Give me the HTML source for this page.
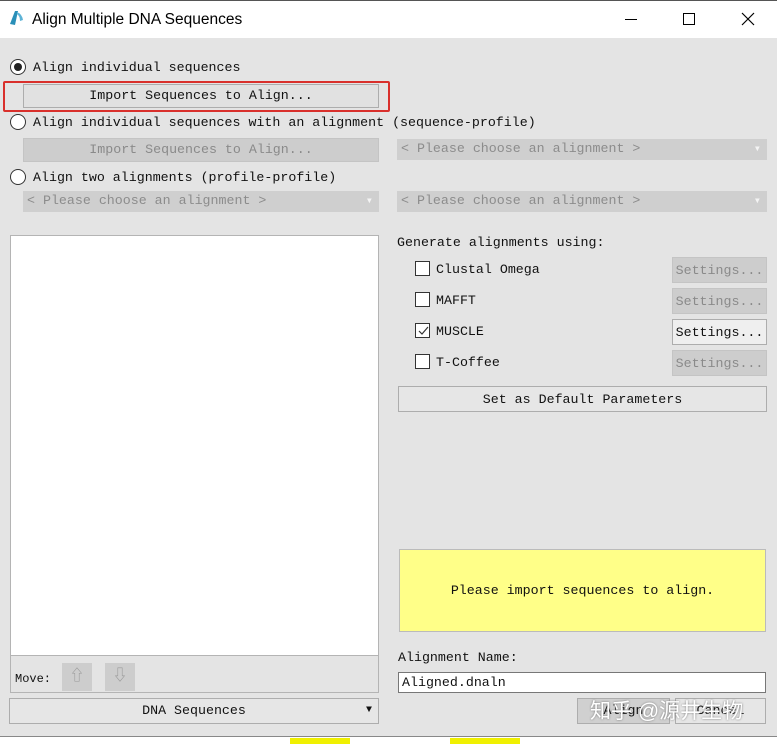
<!DOCTYPE html>
<html><head><meta charset="utf-8"><style>
*{box-sizing:border-box;margin:0;padding:0}
body{width:777px;height:744px;overflow:hidden;background:#e4e4e4;font-family:"Liberation Mono","Noto Sans CJK SC",monospace;font-size:13.3px;color:#111;position:relative}
.a{position:absolute}
.t{position:absolute;white-space:nowrap;line-height:16px}
.btn{position:absolute;border:1px solid #adadad;background:#e6e6e6;text-align:center;line-height:22px;white-space:nowrap}
.dis{background:#cdcdcd;border-color:#c4c4c4;color:#8a8a8a}
.combo{position:absolute;background:#cfcfcf;color:#8c8c8c;line-height:20px;padding-left:4px;white-space:nowrap}
.combo:after{content:"▾";position:absolute;right:6px;top:0;color:#f4f4f4;font-size:12px}
.radio{position:absolute;width:16px;height:16px;border:1px solid #333;border-radius:50%;background:#fff}
.cb{position:absolute;width:15px;height:15px;border:1px solid #333;background:#fff}
</style></head><body>
<div class="a" style="left:0;top:0;width:777px;height:38px;background:#fff;border-top:1px solid #555"></div>
<svg class="a" style="left:7px;top:8px" width="20" height="20" viewBox="0 0 20 20"><path d="M3 16 L8 3 L11 3 L8 17 Z" fill="#2a8fb8"/><path d="M10 4 Q15 6 16 12 L13 13 Q13 8 10 6Z" fill="#5db3d6"/></svg>
<div class="t" style="left:32px;top:10px;font-family:'Liberation Sans','Noto Sans CJK SC',sans-serif;font-size:15.5px;line-height:20px;color:#000">Align Multiple DNA Sequences</div>
<div class="a" style="left:625px;top:19px;width:12px;height:1px;background:#000"></div>
<div class="a" style="left:683px;top:13px;width:12px;height:12px;border:1px solid #000"></div>
<svg class="a" style="left:741px;top:12px" width="14" height="14"><path d="M1 1L13 13M13 1L1 13" stroke="#000" stroke-width="1.2"/></svg>

<div class="radio" style="left:10px;top:59px"><div class="a" style="left:3px;top:3px;width:8px;height:8px;border-radius:50%;background:#222"></div></div>
<div class="t" style="left:33px;top:60px">Align individual sequences</div>
<div class="a" style="left:3px;top:81px;width:387px;height:31px;border:2px solid #d9302c;border-radius:2px"></div>
<div class="btn" style="left:23px;top:84px;width:356px;height:24px;background:#e1e1e1">Import Sequences to Align...</div>

<div class="radio" style="left:10px;top:114px"></div>
<div class="t" style="left:33px;top:115px">Align individual sequences with an alignment (sequence-profile)</div>
<div class="btn dis" style="left:23px;top:138px;width:356px;height:24px">Import Sequences to Align...</div>
<div class="combo" style="left:397px;top:139px;width:370px;height:21px">&lt; Please choose an alignment &gt;</div>

<div class="radio" style="left:10px;top:169px"></div>
<div class="t" style="left:33px;top:170px">Align two alignments (profile-profile)</div>
<div class="combo" style="left:23px;top:191px;width:356px;height:21px">&lt; Please choose an alignment &gt;</div>
<div class="combo" style="left:397px;top:191px;width:370px;height:21px">&lt; Please choose an alignment &gt;</div>

<div class="a" style="left:10px;top:235px;width:369px;height:458px;border:1px solid #b4b4b4;background:#fff"></div>
<div class="a" style="left:11px;top:655px;width:367px;height:37px;background:#e4e4e4;border-top:1px solid #b4b4b4"></div>
<div class="t" style="left:15px;top:671px;font-size:12px">Move:</div>
<div class="a" style="left:62px;top:663px;width:30px;height:28px;background:#cdcdcd;color:#999;text-align:center;line-height:28px;font-size:15px">⇧</div>
<div class="a" style="left:105px;top:663px;width:30px;height:28px;background:#cdcdcd;color:#999;text-align:center;line-height:28px;font-size:15px">⇩</div>
<div class="btn" style="left:9px;top:698px;width:370px;height:26px;line-height:24px">DNA Sequences<span class="a" style="right:6px;top:0;font-size:10px">▼</span></div>

<div class="t" style="left:397px;top:235px">Generate alignments using:</div>
<div class="cb" style="left:415px;top:261px"></div><div class="t" style="left:436px;top:262px">Clustal Omega</div>
<div class="cb" style="left:415px;top:292px"></div><div class="t" style="left:436px;top:293px">MAFFT</div>
<div class="cb" style="left:415px;top:323px"><svg class="a" style="left:1px;top:1px" width="12" height="12"><path d="M2 6L5 9L11 2" stroke="#333" fill="none" stroke-width="1.2"/></svg></div><div class="t" style="left:436px;top:324px">MUSCLE</div>
<div class="cb" style="left:415px;top:354px"></div><div class="t" style="left:436px;top:355px">T-Coffee</div>
<div class="btn dis" style="left:672px;top:257px;width:95px;height:26px;line-height:26px">Settings...</div>
<div class="btn dis" style="left:672px;top:288px;width:95px;height:26px;line-height:26px">Settings...</div>
<div class="btn" style="left:672px;top:319px;width:95px;height:26px;line-height:26px;background:#efefef">Settings...</div>
<div class="btn dis" style="left:672px;top:350px;width:95px;height:26px;line-height:26px">Settings...</div>
<div class="btn" style="left:398px;top:386px;width:369px;height:26px;line-height:26px">Set as Default Parameters</div>

<div class="a" style="left:399px;top:549px;width:367px;height:83px;background:#ffff88;border:1px solid #bbb;text-align:center;line-height:81px">Please import sequences to align.</div>
<div class="t" style="left:398px;top:650px">Alignment Name:</div>
<div class="a" style="left:398px;top:672px;width:368px;height:21px;background:#fff;border:1px solid #777;line-height:19px;padding-left:3px">Aligned.dnaln</div>
<div class="btn" style="left:577px;top:698px;width:93px;height:26px;line-height:24px;background:#d0d0d0">Align</div>
<div class="btn" style="left:675px;top:698px;width:91px;height:26px;line-height:24px">Cancel</div>
<div class="t" style="left:590px;top:699px;font-family:'Liberation Sans','Noto Sans CJK SC',sans-serif;font-size:21px;line-height:26px;color:#fff;text-shadow:0 0 2px #777">知乎 @源井生物</div>

<div class="a" style="left:0;top:736px;width:777px;height:8px;background:#fff;border-top:1px solid #888"></div>
<div class="a" style="left:290px;top:738px;width:60px;height:6px;background:#f0f000"></div>
<div class="a" style="left:450px;top:738px;width:70px;height:6px;background:#f0f000"></div>
</body></html>
